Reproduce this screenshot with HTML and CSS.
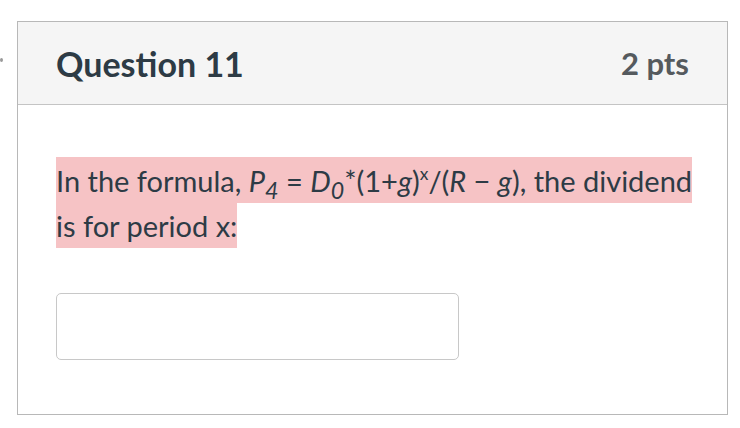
FILE: index.html
```html
<!DOCTYPE html>
<html>
<head>
<meta charset="utf-8">
<link rel="stylesheet" href="styles.css">
</head>
<body>
<div class="card">
  <div class="card-header">
    <h2 class="title">Question 11</h2>
    <div class="points">2 pts</div>
  </div>
  <div class="card-body">
    <p class="question"><span class="mark">In the formula, <em>P<sub>4</sub></em> = <em>D<sub>0</sub></em>*(1+<em>g</em>)<sup>x</sup>/(<em>R</em> − <em>g</em>), the dividend is for period x:</span></p>
    <div class="answer"></div>
  </div>
</div>
</body>
</html>
```
FILE: styles.css
```css
html, body {
  margin: 0;
  padding: 0;
  background: #ffffff;
}
body {
  padding: 21px 12px 13px 17px;
  font-family: Lato, "Open Sans", sans-serif;
  color: #2d3b45;
  position: relative;
}
body::before {
  content: "";
  position: absolute;
  left: 0;
  top: 58px;
  width: 3px;
  height: 4px;
  border-radius: 50%;
  background: #9a9a9a;
}
.card {
  border: 1px solid #b8b8b8;
  height: 392px;
  display: flex;
  flex-direction: column;
}
.card-header {
  background: #f5f5f5;
  border-bottom: 1px solid #c4c4c4;
  height: 82px;
  display: flex;
  align-items: center;
  justify-content: space-between;
  padding: 0 38px 0 38px;
}
.title {
  margin: 0;
  font-size: 34px;
  font-weight: 700;
  color: #2d3b45;
}
.points {
  font-size: 31px;
  font-weight: 700;
  color: #555a5e;
}
.card-body {
  padding: 53px 31px 0 38px;
}
.question {
  margin: 0;
  font-size: 29px;
  line-height: 45px;
  color: #2d3b45;
}
.mark {
  background: #f6c3c5;
  padding: 6px 0 5px 0;
  -webkit-box-decoration-break: clone;
  box-decoration-break: clone;
}
.question sub {
  font-size: 0.8em;
  vertical-align: -0.3em;
  line-height: 0;
}
.question sup {
  font-size: 0.6em;
  vertical-align: 0.7em;
  line-height: 0;
}
.answer {
  margin-top: 45px;
  width: 401px;
  height: 65px;
  border: 1px solid #c8c8c8;
  border-radius: 5px;
}
```
